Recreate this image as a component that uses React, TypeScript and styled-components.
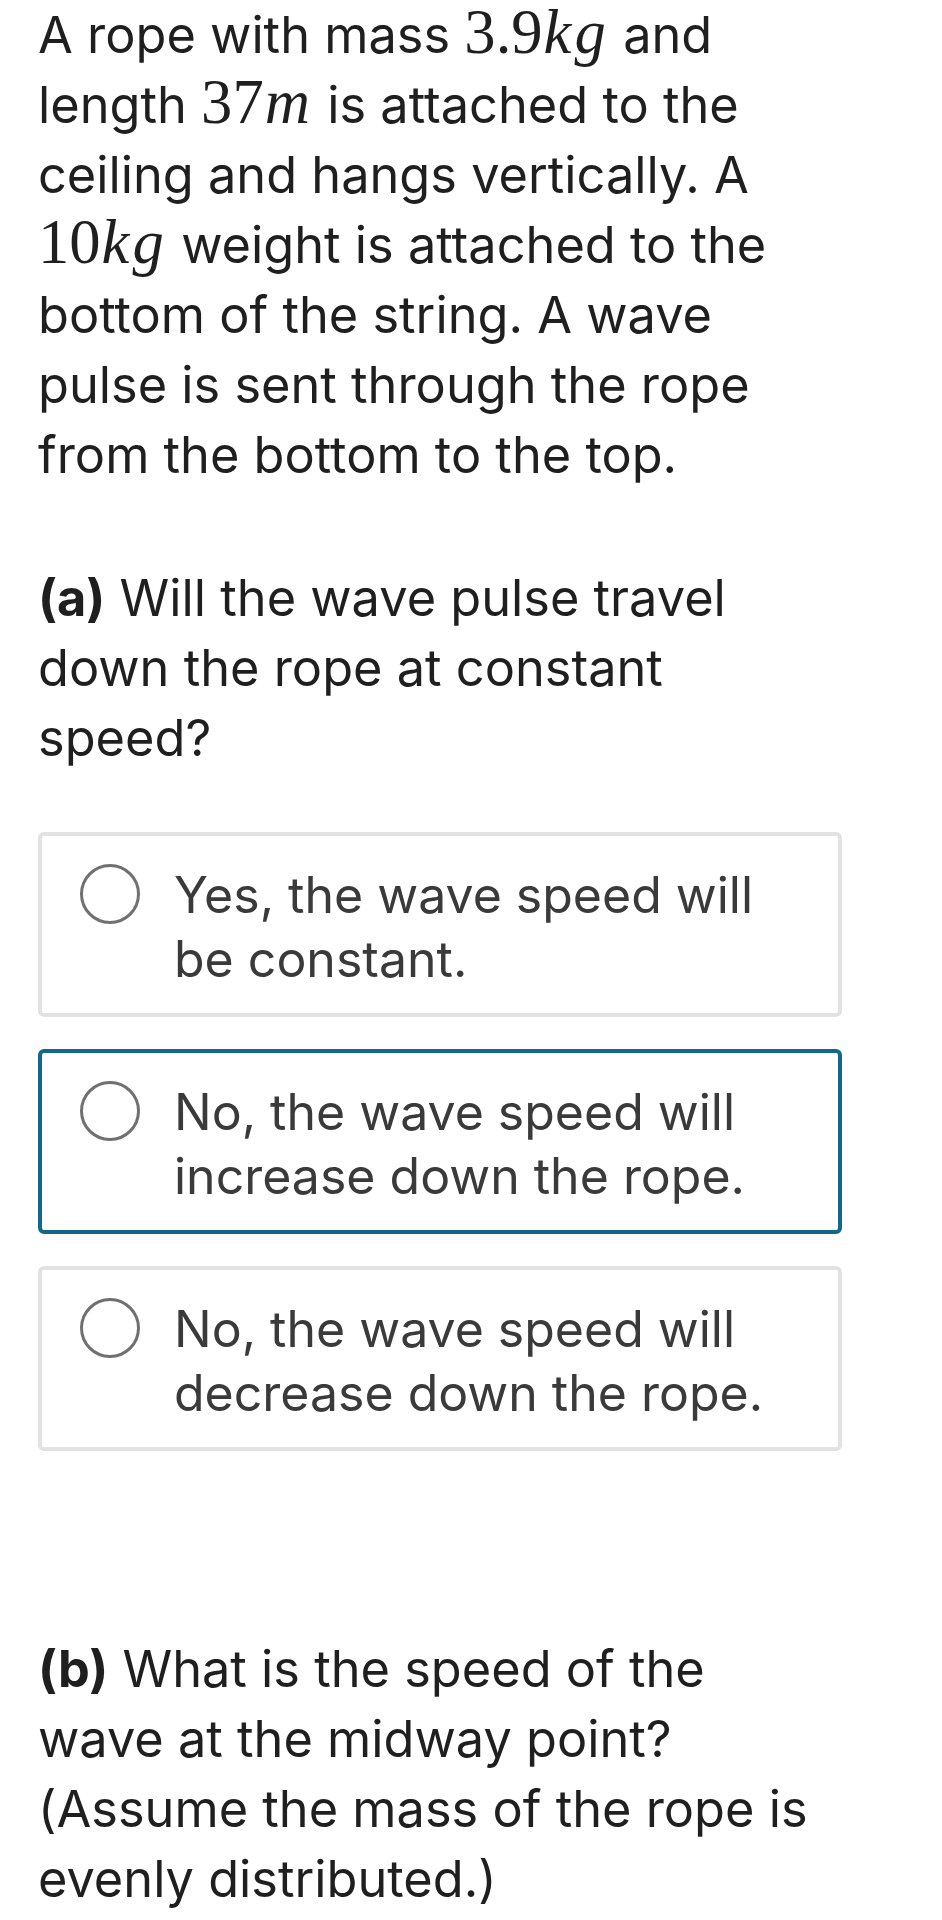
import React from "react";
import styled, { createGlobalStyle } from "styled-components";

const Global = createGlobalStyle`
  html, body { margin: 0; padding: 0; background: #ffffff; }
  body {
    font-family: Inter, "Noto Sans", "Liberation Sans", sans-serif;
    color: #1f1f1f;
    -webkit-font-smoothing: antialiased;
  }
`;

const Page = styled.main`
  width: 804px;
  padding: 0 0 0 38px;
`;

const Para = styled.p<{ $mt?: number }>`
  margin: ${(p) => p.$mt ?? 0}px 0 0 0;
  font-size: 50.5px;
  line-height: 70px;
  font-weight: 400;
`;

const Label = styled.strong`
  font-weight: 700;
`;

const Math = styled.span`
  font-family: "Liberation Serif", "DejaVu Serif", serif;
  font-size: 1.24em;
  line-height: 1;
`;

const Var = styled.i`
  font-style: italic;
  letter-spacing: 0.05em;
  margin-left: 1px;
`;

const Options = styled.div`
  display: flex;
  flex-direction: column;
  gap: 32px;
  margin-top: 59px;
`;

const Option = styled.label<{ $selected?: boolean }>`
  display: flex;
  align-items: flex-start;
  gap: 34px;
  border: 4px solid ${(p) => (p.$selected ? "#13678a" : "#e2e2e2")};
  border-radius: 6px;
  padding: 27px 40px 22px 38px;
  font-size: 50px;
  line-height: 64px;
  color: #3a3a3a;
  cursor: pointer;
`;

const Radio = styled.span`
  flex: 0 0 auto;
  width: 60px;
  height: 60px;
  box-sizing: border-box;
  border: 3px solid #707070;
  border-radius: 50%;
  margin-top: 1px;
`;

const OptionText = styled.span`
  flex: 1 1 auto;
`;

const options = [
  { text: "Yes, the wave speed will be constant.", selected: false },
  { text: "No, the wave speed will increase down the rope.", selected: true },
  { text: "No, the wave speed will decrease down the rope.", selected: false },
];

export default function App() {
  return (
    <>
      <Global />
      <Page>
        <Para>
          A rope with mass{" "}
          <Math>
            3.9<Var>kg</Var>
          </Math>{" "}
          and length{" "}
          <Math>
            37<Var>m</Var>
          </Math>{" "}
          is attached to the ceiling and hangs vertically. A{" "}
          <Math>
            10<Var>kg</Var>
          </Math>{" "}
          weight is attached to the bottom of the string. A wave pulse is sent
          through the rope from the bottom to the top.
        </Para>
        <Para $mt={73}>
          <Label>(a)</Label> Will the wave pulse travel down the rope at
          constant speed?
        </Para>
        <Options>
          {options.map((o) => (
            <Option key={o.text} $selected={o.selected}>
              <Radio />
              <OptionText>{o.text}</OptionText>
            </Option>
          ))}
        </Options>
        <Para $mt={183}>
          <Label>(b)</Label> What is the speed of the wave at the midway
          point? (Assume the mass of the rope is evenly distributed.)
        </Para>
      </Page>
    </>
  );
}
